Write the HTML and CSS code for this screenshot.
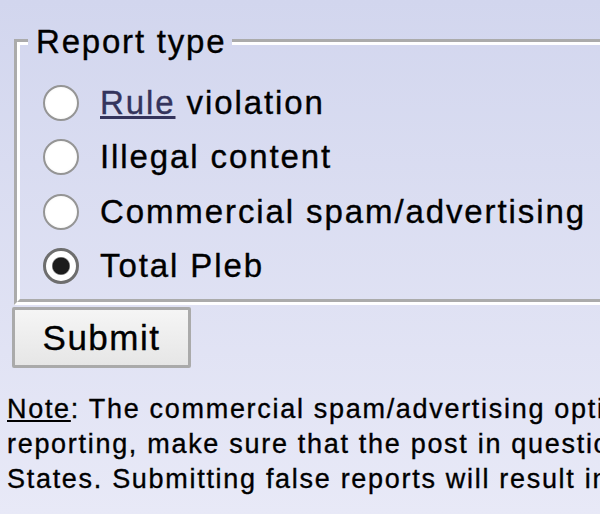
FILE: index.html
```html
<!DOCTYPE html>
<html lang="en">
<head>
<meta charset="utf-8">
<title>Report</title>
<link rel="stylesheet" href="styles.css">
</head>
<body>
<form class="report">
  <fieldset class="types">
    <legend class="types-title">Report type</legend>
    <label class="opt"><input type="radio" name="cat" class="radio"><span><a class="rule-link" href="#">Rule</a> violation</span></label>
    <label class="opt"><input type="radio" name="cat" class="radio"><span>Illegal content</span></label>
    <label class="opt"><input type="radio" name="cat" class="radio"><span>Commercial spam/advertising</span></label>
    <label class="opt"><input type="radio" name="cat" class="radio" checked><span>Total Pleb</span></label>
  </fieldset>
  <button class="submit" type="button">Submit</button>
  <p class="note"><u>Note</u>: The commercial spam/advertising option is for commercial advertisements only. When<br>reporting, make sure that the post in question violates the rules, or contains content illegal in the United<br>States. Submitting false reports will result in a ban.</p>
</form>
</body>
</html>
```
FILE: styles.css
```css
html, body {
  margin: 0;
  width: 600px;
  height: 514px;
  overflow: hidden;
}
body {
  background: linear-gradient(#d2d6ee, #e8e9f7);
  font-family: "Liberation Sans", Arial, sans-serif;
  color: #000;
}
.report {
  display: flex;
  flex-direction: column;
  align-items: flex-start;
  padding-top: 23px;
  -webkit-text-stroke: 0.35px currentColor;
}
.types {
  margin: 0 0 0 14px;
  width: 700px;
  min-width: 0;
  box-sizing: border-box;
  border: 6px groove #fff;
  padding: 15px 0 6px 23px;
}
.types-title {
  margin-left: -15px;
  padding: 0 6px 0 8px;
  font-size: 33px;
  letter-spacing: 1.8px;
}
.opt {
  display: flex;
  align-items: center;
  height: 54.3px;
  font-size: 33px;
  letter-spacing: 1.9px;
}
.radio {
  appearance: none;
  -webkit-appearance: none;
  flex: none;
  width: 36px;
  height: 36px;
  margin: 0 21px 0 0;
  box-sizing: border-box;
  border-radius: 50%;
  border: 2px solid #959595;
  background: radial-gradient(circle, #fff 60%, #ededed);
}
.radio:checked {
  border: 3px solid #6e6e6e;
  background: radial-gradient(circle, #1c1c1c 0 8px, #fff 9.5px 100%);
}
.rule-link {
  color: #34345c;
  text-decoration: underline;
}
.submit {
  margin: 2px 0 0 12px;
  width: 179px;
  height: 61px;
  box-sizing: border-box;
  border: 3px solid #aaaaaa;
  border-radius: 2px;
  background: linear-gradient(#f5f5f5, #e6e6e6);
  font-family: "Liberation Sans", Arial, sans-serif;
  font-size: 35px;
  letter-spacing: 1.5px;
  color: #000;
  padding: 0;
  -webkit-text-stroke: 0.35px #000;
}
.note {
  margin: 24px 0 0 7px;
  font-size: 27px;
  letter-spacing: 1.7px;
  line-height: 35px;
  white-space: nowrap;
}
```
